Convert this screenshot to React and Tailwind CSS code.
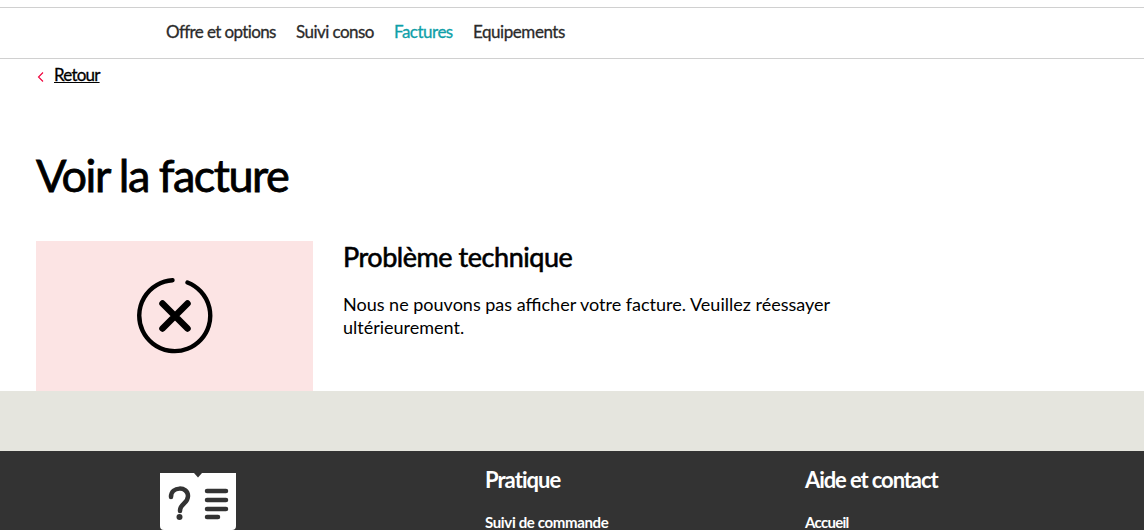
import React from "react";

const App = () => {
  return (
    <div className="h-[530px] w-full overflow-hidden bg-white font-['Lato',sans-serif] text-black">
      {/* Top nav */}
      <div className="mt-[7px] h-[52px] border-y border-[#d0d0d0] flex items-center pl-[166px] gap-5 text-[#2b2b2b] text-[17px] [-webkit-text-stroke:0.3px_currentColor] pb-[3px]">
        <span className="w-[110px] whitespace-nowrap tracking-[-0.62px]">Offre et options</span>
        <span className="w-[78px] whitespace-nowrap tracking-[-0.55px]">Suivi conso</span>
        <span className="w-[59px] whitespace-nowrap tracking-[-0.5px] text-[#0f9fa8]">Factures</span>
        <span className="whitespace-nowrap tracking-[-0.45px]">Equipements</span>
      </div>

      {/* Back link */}
      <div className="pl-[37px] h-[32px] flex items-center gap-[10px]">
        <svg width="7" height="10" viewBox="0 0 7 10" fill="none" className="mt-[3px]">
          <path d="M6 0.5 L1.5 5 L6 9.5" stroke="#f0003c" strokeWidth="1.1" />
        </svg>
        <a className="text-[17px] underline tracking-[-0.8px] -mt-[1px] [-webkit-text-stroke:0.3px_currentColor]">Retour</a>
      </div>

      {/* Title */}
      <h1 className="pl-[36px] mt-[57px] h-[54px] text-[45px] leading-[54px] font-normal tracking-[-1.5px] [-webkit-text-stroke:0.8px_currentColor]">
        Voir la facture
      </h1>

      {/* Error block */}
      <div className="mt-[39px] pl-[36px] flex h-[150px]">
        <div className="w-[277px] h-[150px] bg-[#fce4e4] flex items-center justify-center">
          <svg width="76" height="76" viewBox="0 0 76 76" fill="none" stroke="black" strokeLinecap="round">
            <path d="M35.5 2.2 A35.5 35.5 0 1 0 50.5 4.5" strokeWidth="4.4" />
            <path d="M25.5 25.5 L50.5 50.5 M50.5 25.5 L25.5 50.5" strokeWidth="6.5" />
          </svg>
        </div>
        <div className="pl-[30px] w-[540px]">
          <h2 className="text-[27px] leading-[32px] font-normal tracking-[-0.45px] whitespace-nowrap [-webkit-text-stroke:0.6px_currentColor]">
            Problème technique
          </h2>
          <p className="mt-[20px] text-[18px] leading-[23px]">
            Nous ne pouvons pas afficher votre facture. Veuillez réessayer ultérieurement.
          </p>
        </div>
      </div>

      {/* Beige band */}
      <div className="h-[60px] bg-[#e5e5de]" />

      {/* Footer */}
      <div className="h-[79px] bg-[#333333] flex text-white overflow-hidden">
        <div className="w-[485px] pl-[160px] pt-[22px]">
          <svg width="76" height="57" viewBox="0 0 76 57" fill="none">
            <path d="M0 0 H34 L38 4.5 L42 0 H76 V53 Q76 57 72 57 H4 Q0 57 0 53 Z" fill="white" />
            <path d="M11 24 C11 13 28 13 28 23 C28 31 20 30 20 38" stroke="#333" strokeWidth="4.5" strokeLinecap="round" />
            <circle cx="19.5" cy="44" r="3" fill="#333" />
            <path d="M47 18 H66 M47 27 H66 M47 36 H66 M47 44 H58" stroke="#333" strokeWidth="4.5" strokeLinecap="round" />
          </svg>
        </div>
        <div className="w-[320px] pt-[15px]">
          <div className="text-[22px] leading-[28px] font-bold tracking-[-0.95px]">Pratique</div>
          <div className="mt-[19px] text-[15px] leading-[18px] font-bold tracking-[-0.35px]">Suivi de commande</div>
        </div>
        <div className="pt-[15px]">
          <div className="text-[22px] leading-[28px] font-bold tracking-[-1.1px]">Aide et contact</div>
          <div className="mt-[19px] text-[15px] leading-[18px] font-bold tracking-[-0.7px]">Accueil</div>
        </div>
      </div>
    </div>
  );
};

export default App;
